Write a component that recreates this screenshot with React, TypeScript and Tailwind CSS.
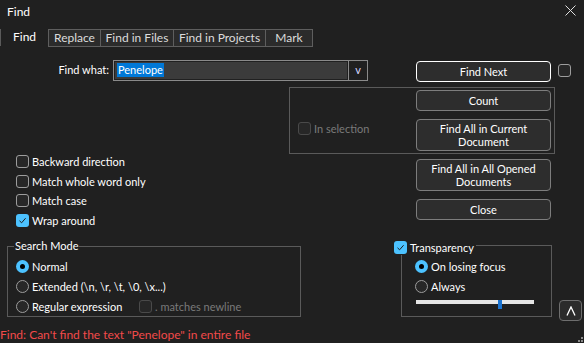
import React from "react";

function Check({ checked, disabled }: { checked?: boolean; disabled?: boolean }) {
  if (checked) {
    return (
      <span className="flex h-[13px] w-[13px] shrink-0 items-center justify-center rounded-[3px] bg-[#4cc2ff]">
        <svg width="9" height="9" viewBox="0 0 9 9">
          <path d="M1.5 4.8 L3.6 6.8 L7.6 2.2" fill="none" stroke="#1c1c1c" strokeWidth="1" />
        </svg>
      </span>
    );
  }
  return (
    <span
      className={`block h-[13px] w-[13px] shrink-0 rounded-[3px] border bg-[#272727] ${
        disabled ? "border-[#4a4a4a]" : "border-[#9d9d9d]"
      }`}
    />
  );
}

function Radio({ checked }: { checked?: boolean }) {
  if (checked) {
    return (
      <span className="flex h-[13px] w-[13px] shrink-0 items-center justify-center rounded-full bg-[#4cc2ff]">
        <span className="h-[5px] w-[5px] rounded-full bg-[#000000]" />
      </span>
    );
  }
  return <span className="block h-[13px] w-[13px] shrink-0 rounded-full border border-[#9d9d9d] bg-[#272727]" />;
}

function Btn({
  children,
  className = "",
  focus,
}: {
  children: React.ReactNode;
  className?: string;
  focus?: boolean;
}) {
  return (
    <div
      className={`flex w-[135px] items-center justify-center rounded-[4px] border bg-[#2d2d2d] text-center leading-[13px] text-[#ffffff] ${
        focus ? "border-[#ffffff]" : "border-[#7d7d7d]"
      } ${className}`}
    >
      {children}
    </div>
  );
}

export default function App() {
  return (
    <div
      className="relative flex h-[343px] w-[584px] flex-col overflow-hidden bg-[#202020] text-[11px] leading-[15px] text-[#ffffff]"
      style={{ fontFamily: "Lato, 'Noto Sans', sans-serif" }}
    >
      {/* title bar */}
      <div className="flex h-[24px] items-center justify-between pl-[7px] pr-[8px] text-[12px]">
        <span>Find</span>
        <svg width="11" height="11" viewBox="0 0 11 11" className="mb-[2px]">
          <path d="M0.5 0.5 L10.5 10.5 M10.5 0.5 L0.5 10.5" stroke="#e0e0e0" strokeWidth="1" />
        </svg>
      </div>

      {/* tabs */}
      <div className="mt-[5px] flex h-[18px] text-[12px]">
        <div className="h-[17px] w-px bg-[#5a5a5a]" />
        <div className="w-[47px] pl-[12px] leading-[15px]">Find</div>
        <div className="flex h-[18px] text-[#dcdcdc]">
          <div className="flex w-[53px] items-center justify-center border border-[#5e5e5e] bg-[#2b2b2b]">Replace</div>
          <div className="flex w-[73px] items-center justify-center border-y border-r border-[#5e5e5e] bg-[#2b2b2b]">
            Find in Files
          </div>
          <div className="flex w-[92px] items-center justify-center border-y border-r border-[#5e5e5e] bg-[#2b2b2b]">
            Find in Projects
          </div>
          <div className="flex w-[47px] items-center justify-center border-y border-r border-[#5e5e5e] bg-[#2b2b2b]">
            Mark
          </div>
        </div>
      </div>

      {/* find what row */}
      <div className="mt-[13px] flex h-[22px] items-start">
        <div className="flex h-[20px] w-[113px] items-center justify-end pr-[4px]">Find what:</div>
        <div className="flex h-[21px] w-[255px] border border-[#8a8a8a]">
          <div className="flex flex-1 p-[1px]">
            <div className="flex flex-1 items-center bg-[#3b3b3b] pl-[2px]">
              <span className="bg-[#0078d7] px-[1px] leading-[14px] text-[#ffffff]">Penelope</span>
            </div>
          </div>
          <div className="flex w-[19px] items-center justify-center border-l border-[#8a8a8a] pb-[2px] text-[#d6d6ff]">
            v
          </div>
        </div>
        <Btn focus className="ml-[48px] mt-px h-[21px]">
          Find Next
        </Btn>
        <span className="ml-[7px] mt-[4px] block">
          <Check />
        </span>
      </div>

      {/* in selection group */}
      <div className="mt-[5px] ml-[289px] flex h-[68px] w-[266px] border border-[#5a5a5a]">
        <div className="flex w-[126px] items-center gap-[3px] pl-[8px] pt-[16px] text-[#7a7a7a]">
          <Check disabled />
          <span>In selection</span>
        </div>
        <div className="flex flex-col gap-[8px] pt-[2px]">
          <Btn className="h-[21px]">Count</Btn>
          <Btn className="h-[32px]">
            Find All in Current
            <br />
            Document
          </Btn>
        </div>
      </div>

      {/* options + buttons */}
      <div className="flex h-[84px]">
        <div className="flex w-[416px] flex-col pl-[16px] pt-[1px]">
          {[
            ["Backward direction", false],
            ["Match whole word only", false],
            ["Match case", false],
            ["Wrap around", true],
          ].map(([label, on]) => (
            <div key={label as string} className="flex h-[19.4px] items-start">
              <div className="flex h-[13px] items-center gap-[3px]">
                <Check checked={on as boolean} />
                <span>{label as string}</span>
              </div>
            </div>
          ))}
        </div>
        <div className="flex flex-col pt-[5px]">
          <Btn className="h-[32px]">
            Find All in All Opened
            <br />
            Documents
          </Btn>
          <Btn className="mt-[8px] h-[21px]">Close</Btn>
        </div>
      </div>

      {/* search mode + transparency */}
      <div className="flex h-[83px] items-start">
        <div className="relative ml-[7px] mt-[8px] h-[71px] w-[294px] border border-[#5a5a5a] pl-[8px] pt-[9px]">
          <span className="absolute left-[6px] top-[-9px] bg-[#202020] px-[1px]">Search Mode</span>
          <div className="flex h-[20px] items-center gap-[3px]">
            <Radio checked />
            <span>Normal</span>
          </div>
          <div className="flex h-[20px] items-center gap-[3px]">
            <Radio />
            <span>Extended (\n, \r, \t, \0, \x...)</span>
          </div>
          <div className="flex h-[20px] items-center">
            <Radio />
            <span className="ml-[3px] w-[107px]">Regular expression</span>
            <Check disabled />
            <span className="ml-[3px] text-[#7a7a7a]">. matches newline</span>
          </div>
        </div>

        <div className="relative ml-[100px] mt-[7px] h-[72px] w-[151px] border border-[#5a5a5a] pl-[13px] pt-[10px]">
          <div className="absolute left-[-8px] top-[-6px] flex items-center gap-[3px] bg-[#202020] pr-[2px]">
            <Check checked />
            <span>Transparency</span>
          </div>
          <div className="flex h-[20px] items-center gap-[3px]">
            <Radio checked />
            <span>On losing focus</span>
          </div>
          <div className="flex h-[20px] items-center gap-[3px]">
            <Radio />
            <span>Always</span>
          </div>
          <div className="relative mt-[1px] ml-[1px] h-[9px] w-[118px]">
            <div className="mt-[4px] h-[4px] w-full bg-[#e6e6e6]" />
            <div className="absolute left-[82px] top-0 h-[9px] w-[4px] bg-[#1a73d1]" />
          </div>
        </div>

        <div className="ml-[7px] mt-[62px] flex h-[21px] w-[23px] items-center justify-center rounded-[4px] border border-[#6e6e6e] bg-[#2b2b2b]">
          <svg width="10" height="10" viewBox="0 0 10 10">
            <path d="M1 9.5 L5 1 L9 9.5" fill="none" stroke="#ffffff" strokeWidth="1.3" />
          </svg>
        </div>
      </div>

      {/* status */}
      <div className="pt-[6px] text-[12px] leading-[16px] text-[#f24a4a]">
        Find: Can't find the text "Penelope" in entire file
      </div>

      {/* resize grip */}
      <div className="absolute bottom-[1px] right-[1px] grid grid-cols-3 gap-[1px]">
        <span className="h-[2px] w-[2px]" />
        <span className="h-[2px] w-[2px]" />
        <span className="h-[2px] w-[2px] bg-[#8a8a8a]" />
        <span className="h-[2px] w-[2px]" />
        <span className="h-[2px] w-[2px] bg-[#8a8a8a]" />
        <span className="h-[2px] w-[2px] bg-[#8a8a8a]" />
      </div>
    </div>
  );
}
